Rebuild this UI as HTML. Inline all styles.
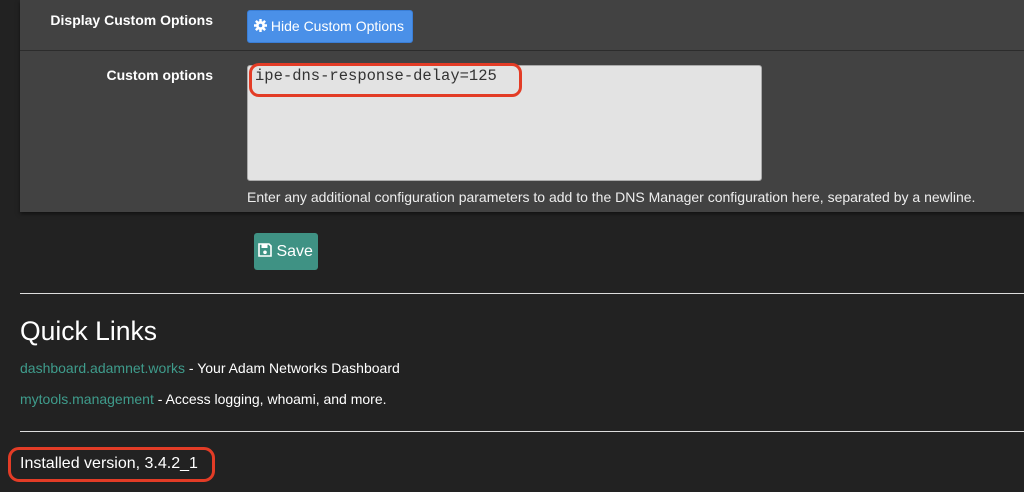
<!DOCTYPE html>
<html><head><style>
body{margin:0;width:1024px;height:492px;background:#222;font-family:"Liberation Sans",sans-serif;color:#fff;position:relative;overflow:hidden}
.a{position:absolute}
.panel{left:20px;top:0;width:1004px;height:212px;background:#424242;box-shadow:0 2px 4px rgba(0,0,0,.5)}
.lbl{font-weight:bold;font-size:14px;text-align:right;width:193px;left:20px}
</style></head><body>
<div class="a panel"></div>
<div class="a" style="left:20px;top:50px;width:1004px;height:1px;background:#2c2c2c"></div>
<div class="a lbl" style="top:12px">Display Custom Options</div>
<div class="a lbl" style="top:67px">Custom options</div>
<div class="a" style="left:247px;top:10px;width:166px;height:33px;background:#4a90e8;border:1px solid #3a7ed6;border-radius:3px;box-sizing:border-box;font-size:14px;line-height:31px;padding-left:6px">
<svg width="13" height="13" viewBox="0 0 16 16" style="vertical-align:-1px"><circle cx="8" cy="8" r="5.5" fill="#fff"/><g stroke="#fff" stroke-width="3"><path d="M8 0v16M0 8h16M2.3 2.3l11.4 11.4M13.7 2.3L2.3 13.7"/></g><circle cx="8" cy="8" r="2.2" fill="#4a90e8"/></svg> Hide Custom Options</div>
<div class="a" style="left:247px;top:65px;width:515px;height:116px;background:#e3e3e3;border:1px solid #aaa;border-radius:3px;box-sizing:border-box"></div>
<div class="a" style="left:255px;top:67px;font-family:'Liberation Mono',monospace;font-size:15.5px;color:#333">ipe-dns-response-delay=125</div>
<div class="a" style="left:249px;top:63px;width:273px;height:34px;border:3px solid #e33c26;border-radius:10px;box-sizing:border-box"></div>
<div class="a" style="left:247px;top:189px;font-size:14px;color:#eee">Enter any additional configuration parameters to add to the DNS Manager configuration here, separated by a newline.</div>
<div class="a" style="left:254px;top:233px;width:64px;height:37px;background:#3f9284;border-radius:3px;font-size:16px;line-height:37px;padding-left:4px;box-sizing:border-box">
<svg width="14" height="14" viewBox="0 0 14 14" style="vertical-align:-1px"><path d="M1 1h10l2 2v10H1z" fill="none" stroke="#fff" stroke-width="1.6"/><rect x="3.5" y="1.5" width="6" height="3.5" fill="#fff"/><circle cx="7" cy="9.3" r="1.8" fill="#fff"/></svg> Save</div>
<div class="a" style="left:20px;top:293px;width:1004px;height:1px;background:#ddd"></div>
<div class="a" style="left:20px;top:316px;font-size:26.5px">Quick Links</div>
<div class="a" style="left:20px;top:360px;font-size:14px"><span style="color:#3f9c8c">dashboard.adamnet.works</span> - Your Adam Networks Dashboard</div>
<div class="a" style="left:20px;top:391px;font-size:14px"><span style="color:#3f9c8c">mytools.management</span> - Access logging, whoami, and more.</div>
<div class="a" style="left:20px;top:431px;width:1004px;height:1px;background:#ddd"></div>
<div class="a" style="left:20px;top:455px;font-size:16px">Installed version, 3.4.2_1</div>
<div class="a" style="left:8px;top:447px;width:207px;height:35px;border:3px solid #e33c26;border-radius:11px;box-sizing:border-box"></div>
</body></html>
